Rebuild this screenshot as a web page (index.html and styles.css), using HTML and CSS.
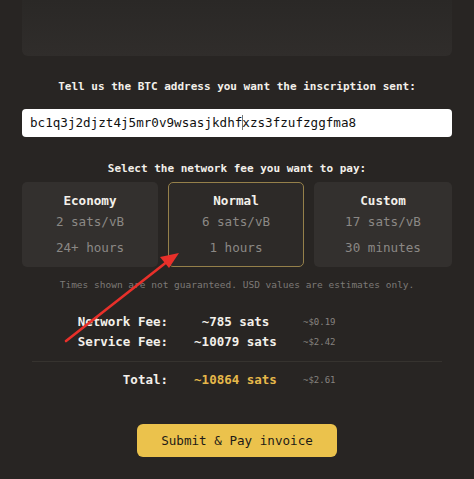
FILE: index.html
```html
<!DOCTYPE html>
<html>
<head>
<meta charset="utf-8">
<link rel="stylesheet" href="styles.css">
</head>
<body>
<div class="page">
  <div class="preview"></div>
  <p class="label addr-label">Tell us the BTC address you want the inscription sent:</p>
  <div class="input">bc1q3j2djzt4j5mr0v9wsasjkdhf<span class="caret"></span>xzs3fzufzggfma8</div>
  <p class="label fee-label">Select the network fee you want to pay:</p>
  <div class="cards">
    <div class="card">
      <div class="card-title">Economy</div>
      <div class="card-rate">2 sats/vB</div>
      <div class="card-time">24+ hours</div>
    </div>
    <div class="card selected">
      <div class="card-title">Normal</div>
      <div class="card-rate">6 sats/vB</div>
      <div class="card-time">1 hours</div>
    </div>
    <div class="card">
      <div class="card-title">Custom</div>
      <div class="card-rate">17 sats/vB</div>
      <div class="card-time">30 minutes</div>
    </div>
  </div>
  <p class="note">Times shown are not guaranteed. USD values are estimates only.</p>
  <div class="fees">
    <div class="row">
      <span class="f-label">Network Fee:</span>
      <span class="f-val">~785 sats</span>
      <span class="f-usd">~$0.19</span>
    </div>
    <div class="row">
      <span class="f-label">Service Fee:</span>
      <span class="f-val">~10079 sats</span>
      <span class="f-usd">~$2.42</span>
    </div>
    <div class="divider"></div>
    <div class="row">
      <span class="f-label">Total:</span>
      <span class="f-val gold">~10864 sats</span>
      <span class="f-usd">~$2.61</span>
    </div>
  </div>
  <div class="actions">
    <button class="submit">Submit &amp; Pay invoice</button>
  </div>
  <svg class="arrow" width="474" height="479" viewBox="0 0 474 479">
    <line x1="66" y1="341" x2="168" y2="261" stroke="#e8302a" stroke-width="2.6" stroke-linecap="round"/>
    <polygon points="179,253 160,257 169,268" fill="#e8302a"/>
  </svg>
</div>
</body>
</html>
```
FILE: styles.css
```css
html, body {
  margin: 0;
  padding: 0;
  background: #282523;
}
body {
  font-family: "DejaVu Sans Mono", "Liberation Mono", monospace;
  color: #f1eee9;
}
.page {
  position: relative;
  width: 474px;
  height: 479px;
  padding: 0 22px;
  box-sizing: border-box;
  overflow: hidden;
}
.preview {
  height: 56px;
  background: linear-gradient(180deg, #2a2826 0%, #302d2b 100%);
  border-radius: 0 0 6px 6px;
}
.label {
  margin: 0;
  text-align: center;
  font-size: 11px;
  line-height: 16px;
  font-weight: bold;
  color: #f3f0ea;
}
.addr-label {
  margin-top: 23px;
}
.input {
  margin-top: 14px;
  height: 28px;
  background: #ffffff;
  border-radius: 4px;
  color: #111;
  font-size: 12.6px;
  line-height: 28px;
  padding-left: 8px;
  white-space: nowrap;
}
.caret {
  display: inline-block;
  width: 1px;
  height: 15px;
  background: #777;
  vertical-align: -3px;
  margin-right: -1px;
}
.fee-label {
  margin-top: 24px;
}
.cards {
  margin-top: 5px;
  display: grid;
  grid-template-columns: 136px 136px 1fr;
  column-gap: 10px;
}
.card {
  height: 85px;
  box-sizing: border-box;
  background: #33302e;
  border-radius: 5px;
  text-align: center;
  padding-top: 10px;
  font-size: 12.6px;
}
.card.selected {
  background: #2d2a28;
  border: 1px solid #95804a;
  padding-top: 9px;
}
.card-title {
  line-height: 18px;
  font-weight: bold;
  color: #f3f0ea;
}
.card-rate {
  line-height: 24px;
  color: #8b8885;
}
.card-time {
  line-height: 28px;
  color: #8b8885;
}
.note {
  margin: 11px 0 0;
  text-align: center;
  font-size: 9.5px;
  line-height: 14px;
  color: #7d7a77;
}
.fees {
  margin: 20px 10px 0;
}
.row {
  display: grid;
  grid-template-columns: 136px 107px 1fr;
  column-gap: 14px;
  line-height: 20px;
  height: 20px;
  align-items: center;
}
.f-label {
  text-align: right;
  font-size: 12.5px;
  font-weight: bold;
  color: #f3f0ea;
}
.f-val {
  text-align: center;
  font-size: 12.5px;
  font-weight: bold;
  color: #f3f0ea;
}
.f-val.gold {
  color: #e6b84a;
}
.f-usd {
  font-size: 9px;
  color: #86827f;
}
.divider {
  height: 1px;
  background: #36332f;
  margin: 9px 0 8px;
}
.actions {
  display: flex;
  justify-content: center;
  margin-top: 34px;
}
.submit {
  width: 200px;
  height: 33px;
  border: none;
  border-radius: 6px;
  background: #ebc24c;
  color: #1e1b17;
  font-family: "DejaVu Sans Mono", "Liberation Mono", monospace;
  font-size: 12.6px;
}
.arrow {
  position: absolute;
  left: 0;
  top: 0;
  pointer-events: none;
}
```
